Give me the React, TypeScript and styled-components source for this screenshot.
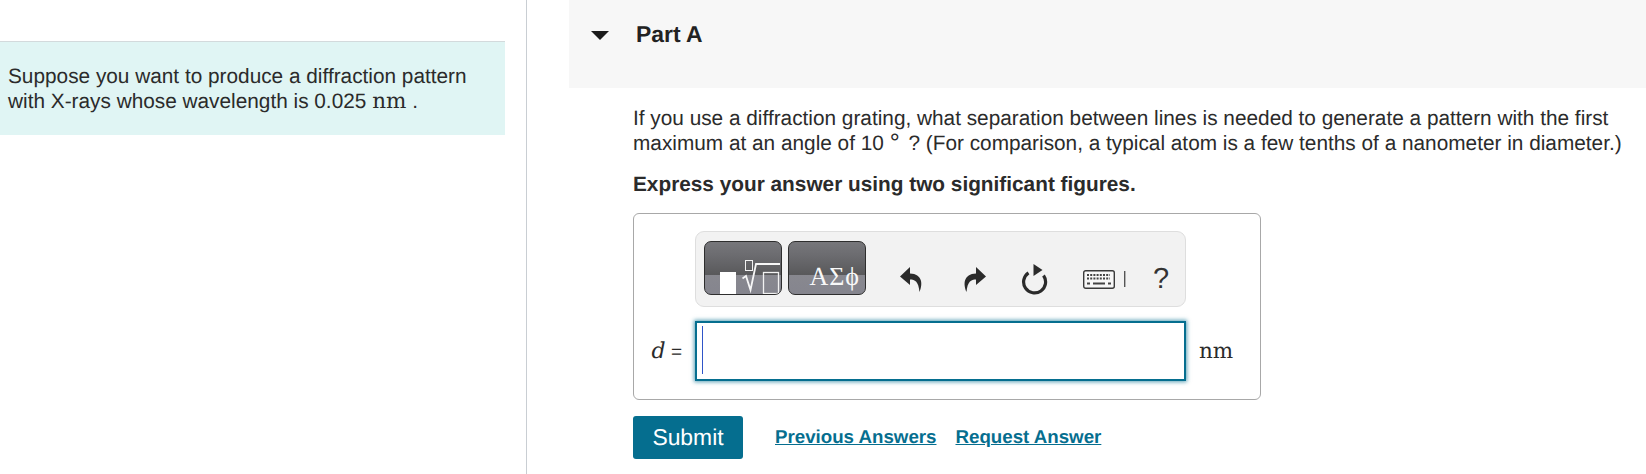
import React from "react";
import styled, { createGlobalStyle } from "styled-components";

const Global = createGlobalStyle`
  html, body { margin: 0; padding: 0; background: #fff; }
  body { font-family: "Liberation Sans", Arial, sans-serif; color: #2b2b2b; overflow: hidden; text-rendering: geometricPrecision; }
`;
const Page = styled.div`
  display: flex;
  width: 1646px;
  height: 474px;
  overflow: hidden;
`;
const LeftColumn = styled.aside`
  height: 474px;
  flex: none;
  padding-top: 41px;
  box-sizing: border-box;
  border-right: 1px solid #c9ced3;
  width: 527px;
`;
const Intro = styled.div`
  width: 505px;
  height: 94px;
  box-sizing: border-box;
  background: #e0f5f4;
  border-top: 1px solid #d3dadc;
  padding: 22px 8px 0;
  font-size: 20.8px;
  line-height: 25px;
`;
const Math = styled.span`
  font-family: "DejaVu Serif", serif;
  font-size: 21.5px;
`;
const RightColumn = styled.main`
  flex: 1;
  padding-left: 42px;
  min-width: 0;
`;
const PartHeader = styled.header`
  height: 88px;
  background: #f7f7f7;
  display: flex;
  align-items: flex-start;
  padding-top: 22px;
  box-sizing: border-box;
`;
const Caret = styled.span`
  width: 0;
  height: 0;
  margin: 9px 0 0 22px;
  border-left: 9px solid transparent;
  border-right: 9px solid transparent;
  border-top: 9px solid #1c1c1c;
`;
const PartTitle = styled.h2`
  margin: 0 0 0 27px;
  font-size: 22.88px;
  line-height: 25px;
  font-weight: 700;
  color: #222;
`;
const Content = styled.div`
  padding: 18px 0 0 64px;
`;
const Prompt = styled.p`
  margin: 0;
  font-size: 20.8px;
  line-height: 25px;
  white-space: nowrap;
`;
const Degree = styled.span`
  font-size: 25px;
  line-height: 0;
  vertical-align: -1px;
  margin-right: 3px;
`;
const Instruction = styled.p`
  margin: 16px 0 0;
  font-size: 20.8px;
  line-height: 25px;
  font-weight: 700;
`;
const AnswerBox = styled.section`
  margin-top: 16px;
  width: 628px;
  height: 187px;
  box-sizing: border-box;
  border: 1px solid #a8a8a8;
  border-radius: 6px;
  padding: 17px 0 0 61px;
`;
const Toolbar = styled.div`
  width: 491px;
  height: 76px;
  box-sizing: border-box;
  border: 1px solid #dedede;
  border-radius: 9px;
  background: #f2f2f2;
  display: flex;
  align-items: flex-start;
  padding: 9px 0 0 8px;
`;
const MathButton = styled.div<{ $gap?: number }>`
  width: 78px;
  height: 54px;
  margin-left: ${(p) => p.$gap ?? 0}px;
  box-sizing: border-box;
  border: 1px solid #2e2e2e;
  border-radius: 7px;
  flex: none;
  background: linear-gradient(#77777b 0, #6c6c70 25%, #59595b 63%, #88888f 64%, #85858e 100%);
  overflow: hidden;
  display: flex;
  align-items: flex-end;
  justify-content: flex-end;
`;
const Greek = styled.span`
  font-family: "Liberation Serif", serif;
  font-size: 26px;
  line-height: 26px;
  letter-spacing: 1px;
  color: #f8f8f8;
  margin: 0 5px 4px 0;
`;
const ToolSlot = styled.div<{ $left: number }>`
  margin: 23px 0 0 ${(p) => p.$left}px;
  height: 30px;
  display: flex;
  align-items: center;
  flex: none;
`;
const Help = styled.span`
  font-size: 29px;
  line-height: 30px;
  color: #333;
`;
const AnswerRow = styled.div`
  display: flex;
  align-items: center;
  margin-top: 14px;
  margin-left: -61px;
`;
const VarLabel = styled.span`
  width: 48px;
  text-align: right;
  font-size: 19px;
  white-space: pre;
  flex: none;
  margin-right: 13px;
`;
const VarName = styled.i`
  font-family: "DejaVu Serif", serif;
  font-size: 22px;
`;
const AnswerField = styled.div`
  width: 491px;
  height: 60px;
  box-sizing: border-box;
  border: 2px solid #056e8f;
  box-shadow: 0 0 4px 1px rgba(5, 110, 143, 0.65);
  background: #fff;
  flex: none;
  padding: 3px 0 0 5px;
`;
const Cursor = styled.div`
  width: 1px;
  height: 48px;
  background: #2f55c8;
`;
const Unit = styled.span`
  margin-left: 13px;
  font-family: "DejaVu Serif", serif;
  font-size: 21.5px;
`;
const Actions = styled.div`
  display: flex;
  align-items: center;
  margin-top: 16px;
`;
const SubmitButton = styled.button`
  width: 110px;
  height: 43px;
  border: 0;
  border-radius: 3px;
  background: #056e8f;
  color: #fff;
  font: 400 22.88px "Liberation Sans", Arial, sans-serif;
  text-rendering: geometricPrecision;
  padding: 0;
`;
const ActionLink = styled.a<{ $left: number }>`
  margin: 0 0 2px ${(p) => p.$left}px;
  color: #056e8f;
  font-size: 18.72px;
  font-weight: 700;
  text-decoration: underline;
`;

const TemplateIcon = () => (
  <svg width="76" height="52" viewBox="0 0 76 52" style={{ flex: "none" }}>
    <rect x="15" y="30" width="16" height="22" fill="#fff" />
    <rect x="40.5" y="18.5" width="7" height="10" fill="none" stroke="#f2f2f2" />
    <path d="M37.5 36.5 L41 34 L45.5 48 L51 22 H75" fill="none" stroke="#f6f6f6" strokeWidth="1.8" />
    <rect x="58.5" y="30.5" width="15" height="21" fill="none" stroke="#f2f2f2" strokeWidth="1.3" />
  </svg>
);
const UndoIcon = ({ flip }: { flip?: boolean }) => (
  <svg width="24" height="27" viewBox="0 0 24 27" style={flip ? { transform: "scaleX(-1)" } : undefined}>
    <path d="M11 1 L1 10.5 L11 19 V13.5 C16 13.5 19.5 15.5 20.5 26 C24 18 23.5 8 11 7.5 Z" fill="#2b2b2b" />
  </svg>
);
const ReloadIcon = () => (
  <svg width="28" height="32" viewBox="0 0 28 32">
    <path d="M7.5 9.8 A11 11 0 1 0 22.5 12.5" fill="none" stroke="#2b2b2b" strokeWidth="3.2" />
    <path d="M12.5 1 L21.5 7 L12.5 13 Z" fill="#2b2b2b" />
  </svg>
);
const KeyboardIcon = () => (
  <svg width="32" height="19" viewBox="0 0 32 19">
    <rect x="0.7" y="0.7" width="30.6" height="17.6" rx="2" fill="#f7f7f7" stroke="#3a3a3a" strokeWidth="1.4" />
    <path d="M4 5 H27 M4 8.5 H27" stroke="#444" strokeWidth="1.8" strokeDasharray="2 1.2" />
    <path d="M4 13.5 H7 M10 13.5 H22 M25 13.5 H28" stroke="#444" strokeWidth="2" />
  </svg>
);
const Separator = () => (
  <svg width="2" height="16" viewBox="0 0 2 16"><rect width="1.4" height="16" fill="#555" /></svg>
);

export default function App() {
  return (
    <Page>
      <Global />
      <LeftColumn>
        <Intro>
          Suppose you want to produce a diffraction pattern
          <br />
          with X-rays whose wavelength is 0.025 <Math>nm</Math> .
        </Intro>
      </LeftColumn>
      <RightColumn>
        <PartHeader>
          <Caret />
          <PartTitle>Part A</PartTitle>
        </PartHeader>
        <Content>
          <Prompt>
            If you use a diffraction grating, what separation between lines is needed to generate a pattern with the first
            <br />
            maximum at an angle of 10 <Degree>°</Degree> ? (For comparison, a typical atom is a few tenths of a nanometer in diameter.)
          </Prompt>
          <Instruction>Express your answer using two significant figures.</Instruction>
          <AnswerBox>
            <Toolbar>
              <MathButton><TemplateIcon /></MathButton>
              <MathButton $gap={6}><Greek>ΑΣϕ</Greek></MathButton>
              <ToolSlot $left={33}><UndoIcon /></ToolSlot>
              <ToolSlot $left={40}><UndoIcon flip /></ToolSlot>
              <ToolSlot $left={34}><ReloadIcon /></ToolSlot>
              <ToolSlot $left={34}><KeyboardIcon /></ToolSlot>
              <ToolSlot $left={9}><Separator /></ToolSlot>
              <ToolSlot $left={27}><Help>?</Help></ToolSlot>
            </Toolbar>
            <AnswerRow>
              <VarLabel><VarName>d</VarName> =</VarLabel>
              <AnswerField><Cursor /></AnswerField>
              <Unit>nm</Unit>
            </AnswerRow>
          </AnswerBox>
          <Actions>
            <SubmitButton>Submit</SubmitButton>
            <ActionLink $left={32} href="#">Previous Answers</ActionLink>
            <ActionLink $left={19} href="#">Request Answer</ActionLink>
          </Actions>
        </Content>
      </RightColumn>
    </Page>
  );
}
